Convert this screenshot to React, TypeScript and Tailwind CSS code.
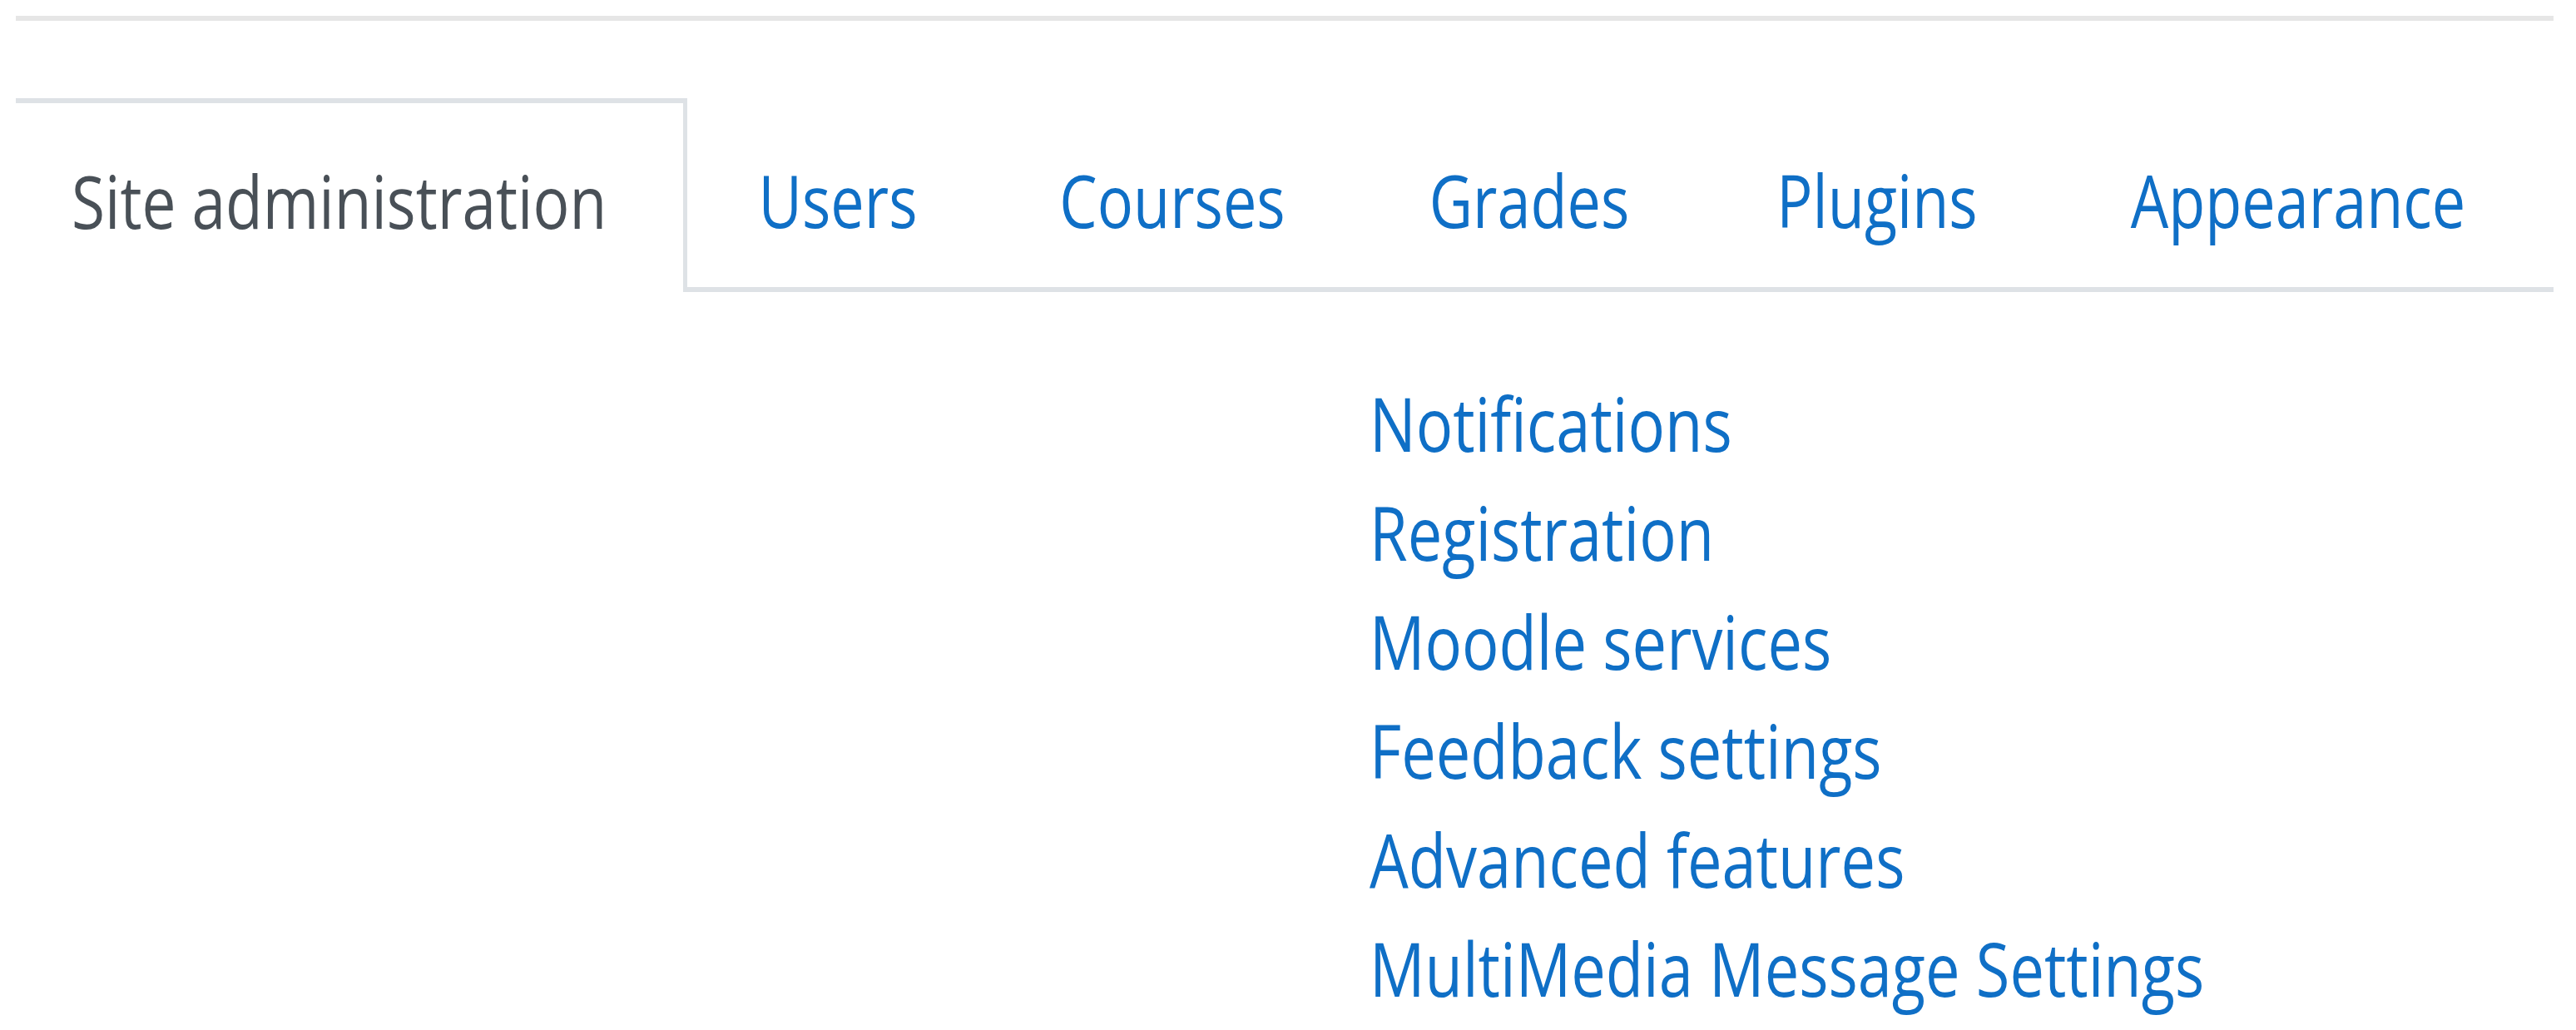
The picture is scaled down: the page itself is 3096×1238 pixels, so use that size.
import React from 'react';

const tabs = [
  { label: 'Users', width: 'w-[362px]' },
  { label: 'Courses', width: 'w-[442px]' },
  { label: 'Grades', width: 'w-[416px]' },
  { label: 'Plugins', width: 'w-[420px]' },
  { label: 'Appearance', width: 'w-[592px]' },
];

const links = [
  'Notifications',
  'Registration',
  'Moodle services',
  'Feedback settings',
  'Advanced features',
  'MultiMedia Message Settings',
];

// the screenshot is stretched tall, so glyphs get a vertical scale
const Stretched: React.FC<{ children: React.ReactNode }> = ({ children }) => (
  <span className="inline-block leading-[131px] scale-y-[1.21] whitespace-nowrap">{children}</span>
);

const App: React.FC = () => {
  return (
    <div
      className="min-h-screen w-[3096px] bg-white pl-[19px] pr-[27px] pt-[19px]"
      style={{ fontFamily: '"Open Sans", "Noto Sans", sans-serif' }}
    >
      <div className="h-[6px] bg-[#e6e6e6]" />

      <nav className="mt-[93px] flex border-b-[6px] border-[#dee2e6] text-[72px]">
        <div className="relative z-10 -mb-[6px] w-[807px] border-t-[6px] border-r-[5px] border-[#dee2e6] bg-white pl-[67px] pt-[51px] pb-[45px] text-[73px] text-[#495057]">
          <Stretched>Site administration</Stretched>
        </div>
        {tabs.map((t) => (
          <a
            key={t.label}
            href="#"
            className={`${t.width} border-t-[6px] border-transparent pt-[51px] pb-[39px] text-center text-[#0f6fc6]`}
          >
            <Stretched>{t.label}</Stretched>
          </a>
        ))}
      </nav>

      <ul className="ml-[1627px] mt-[92px] text-[74px] text-[#0f6fc6]">
        {links.map((l) => (
          <li key={l} className="h-[131px]">
            <a href="#">
              <Stretched>{l}</Stretched>
            </a>
          </li>
        ))}
      </ul>
    </div>
  );
};

export default App;
